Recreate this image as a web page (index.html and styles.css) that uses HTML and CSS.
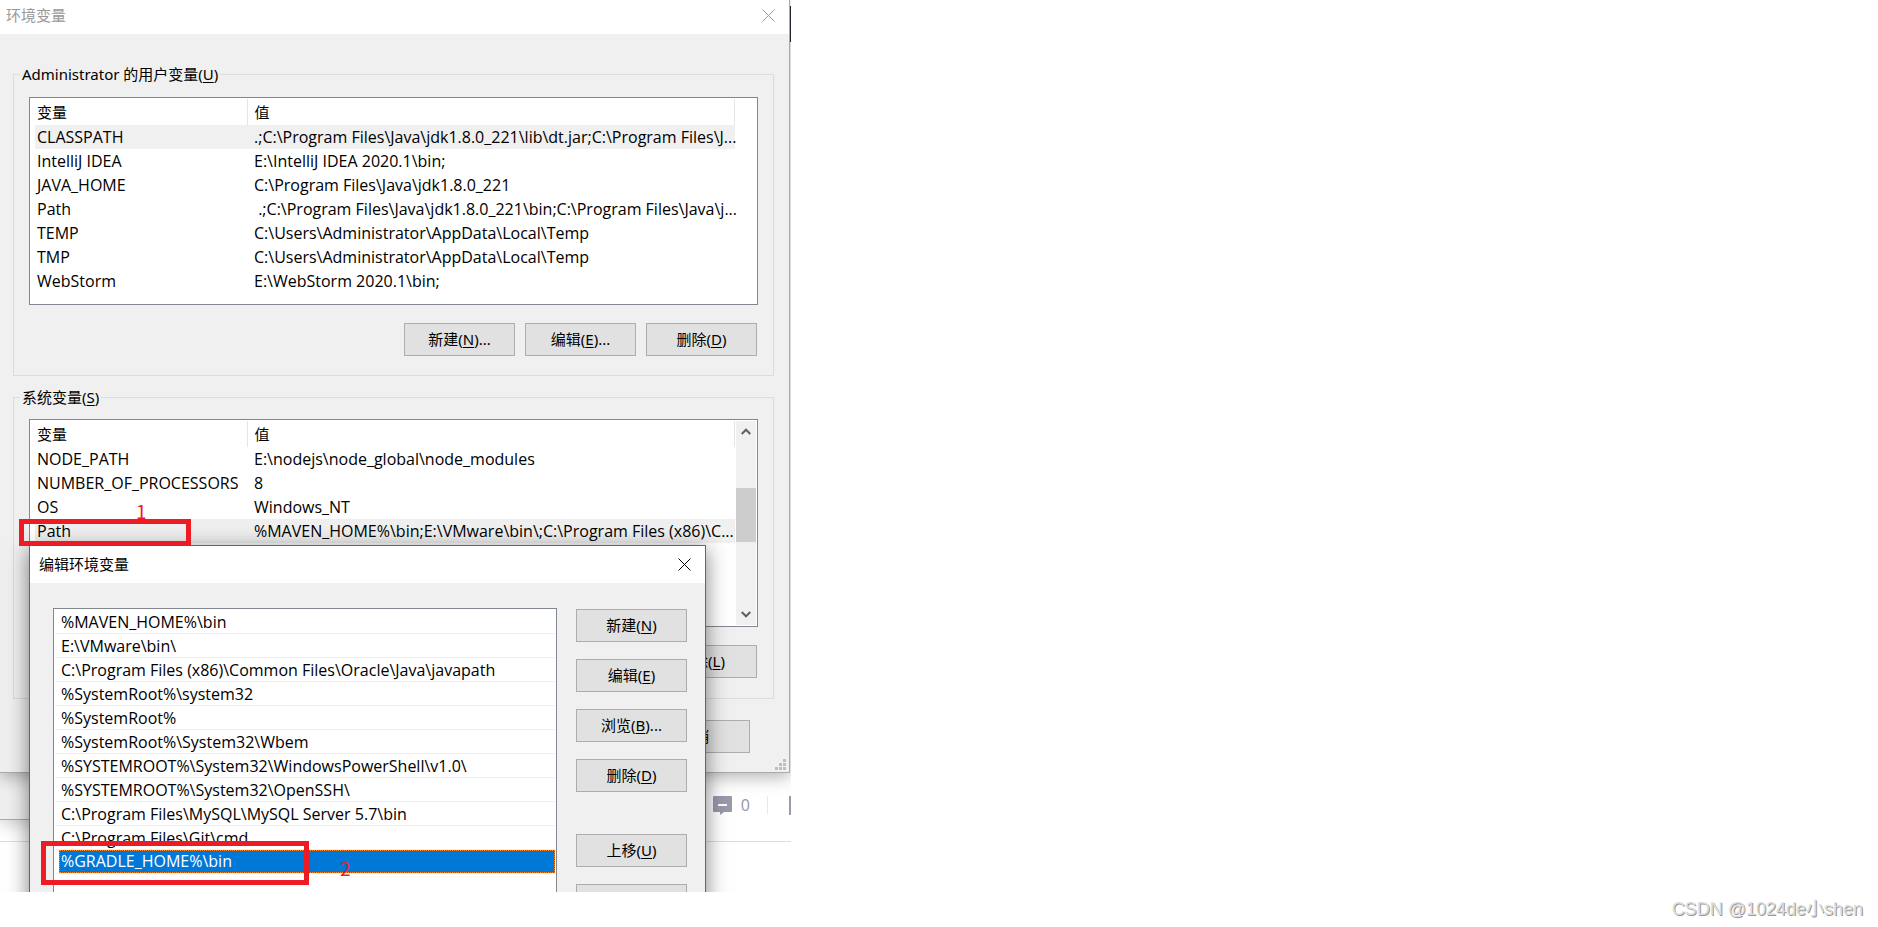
FILE: index.html
```html
<!DOCTYPE html>
<html lang="zh-CN">
<head>
<meta charset="utf-8">
<title>环境变量</title>
<link rel="stylesheet" href="styles.css">
</head>
<body>
<main class="desktop">
  <div class="page-behind">
    <div class="avatar-edge"></div>
    <div class="comment-bar">
      <svg class="comment-icon" width="19" height="19" viewBox="0 0 19 19" aria-hidden="true"><path d="M1 0H18Q19 0 19 1V15Q19 16 18 16H11L7 19V16H1Q0 16 0 15V1Q0 0 1 0Z" fill="#999aaa"/><path d="M5 9H14" stroke="#fff" stroke-width="2"/></svg>
      <span class="comment-count">0</span>
      <span class="comment-split"></span>
      <span class="comment-next"></span>
    </div>
  </div>
  <div class="window-behind"></div>

  <section class="window variables" aria-label="环境变量">
    <header class="titlebar inactive">
      <h1 class="title">环境变量</h1>
      <button class="close" aria-label="关闭"><svg width="13" height="13" viewBox="0 0 13 13"><path d="M.5 .5L12.5 12.5M12.5 .5L.5 12.5" stroke="currentColor" fill="none"/></svg></button>
    </header>
    <div class="window-body">
      <fieldset class="group">
        <legend>Administrator 的用户变量(<u>U</u>)</legend>
        <div class="listbox">
          <table class="list">
            <thead><tr><th>变量</th><th>值</th></tr></thead>
            <tbody>
              <tr class="current"><td>CLASSPATH</td><td>.;C:\Program Files\Java\jdk1.8.0_221\lib\dt.jar;C:\Program Files\J...</td></tr>
              <tr><td>IntelliJ IDEA</td><td>E:\IntelliJ IDEA 2020.1\bin;</td></tr>
              <tr><td>JAVA_HOME</td><td>C:\Program Files\Java\jdk1.8.0_221</td></tr>
              <tr><td>Path</td><td>&nbsp;.;C:\Program Files\Java\jdk1.8.0_221\bin;C:\Program Files\Java\j...</td></tr>
              <tr><td>TEMP</td><td>C:\Users\Administrator\AppData\Local\Temp</td></tr>
              <tr><td>TMP</td><td>C:\Users\Administrator\AppData\Local\Temp</td></tr>
              <tr><td>WebStorm</td><td>E:\WebStorm 2020.1\bin;</td></tr>
            </tbody>
          </table>
        </div>
        <div class="actions">
          <button class="btn">新建(<u>N</u>)...</button>
          <button class="btn">编辑(<u>E</u>)...</button>
          <button class="btn">删除(<u>D</u>)</button>
        </div>
      </fieldset>
      <fieldset class="group">
        <legend>系统变量(<u>S</u>)</legend>
        <div class="listbox">
          <table class="list">
            <thead><tr><th>变量</th><th>值</th></tr></thead>
            <tbody>
              <tr><td>NODE_PATH</td><td>E:\nodejs\node_global\node_modules</td></tr>
              <tr><td>NUMBER_OF_PROCESSORS</td><td>8</td></tr>
              <tr><td>OS</td><td>Windows_NT</td></tr>
              <tr class="current"><td>Path</td><td>%MAVEN_HOME%\bin;E:\VMware\bin\;C:\Program Files (x86)\C...</td></tr>
            </tbody>
          </table>
          <div class="scrollbar" aria-hidden="true">
            <svg width="10" height="7" viewBox="0 0 10 7"><path d="M.7 6L5 1.7L9.3 6" fill="none" stroke="#606060" stroke-width="2"/></svg>
            <div class="thumb"></div>
            <svg width="10" height="7" viewBox="0 0 10 7"><path d="M.7 1L5 5.3L9.3 1" fill="none" stroke="#606060" stroke-width="2"/></svg>
          </div>
        </div>
        <div class="actions">
          <button class="btn">删除(<u>L</u>)</button>
        </div>
      </fieldset>
      <div class="confirm"><button class="btn">取消</button></div>
    </div>
    <svg class="grip" width="11" height="11" viewBox="0 0 11 11" aria-hidden="true"><path d="M8 0h3v3h-3zM4 4h3v3h-3zM8 4h3v3h-3zM0 8h3v3h-3zM4 8h3v3h-3zM8 8h3v3h-3z" fill="#bfbfbf"/></svg>
  </section>

  <section class="window editor" aria-label="编辑环境变量">
    <header class="titlebar">
      <h2 class="title">编辑环境变量</h2>
      <button class="close" aria-label="关闭"><svg width="13" height="13" viewBox="0 0 13 13"><path d="M.5 .5L12.5 12.5M12.5 .5L.5 12.5" stroke="currentColor" fill="none"/></svg></button>
    </header>
    <div class="editor-body">
      <ul class="paths">
        <li>%MAVEN_HOME%\bin</li>
        <li>E:\VMware\bin\</li>
        <li>C:\Program Files (x86)\Common Files\Oracle\Java\javapath</li>
        <li>%SystemRoot%\system32</li>
        <li>%SystemRoot%</li>
        <li>%SystemRoot%\System32\Wbem</li>
        <li>%SYSTEMROOT%\System32\WindowsPowerShell\v1.0\</li>
        <li>%SYSTEMROOT%\System32\OpenSSH\</li>
        <li>C:\Program Files\MySQL\MySQL Server 5.7\bin</li>
        <li>C:\Program Files\Git\cmd</li>
        <li class="selected"><span>%GRADLE_HOME%\bin</span></li>
      </ul>
      <div class="side">
        <button class="btn">新建(<u>N</u>)</button>
        <button class="btn">编辑(<u>E</u>)</button>
        <button class="btn">浏览(<u>B</u>)...</button>
        <button class="btn">删除(<u>D</u>)</button>
        <button class="btn apart">上移(<u>U</u>)</button>
        <button class="btn" aria-label="下移"></button>
      </div>
    </div>
  </section>

  <div class="mark mark-one"></div>
  <span class="step step-one">1</span>
  <div class="mark mark-two"></div>
  <span class="step step-two">2</span>
</main>
<footer class="watermark">CSDN @1024de小shen</footer>
</body>
</html>
```
FILE: styles.css
```css
* { box-sizing: border-box; }

body {
  margin: 0;
  background: #fff;
  color: #000;
  font: 15px/20px "Noto Sans", "Noto Sans CJK SC", sans-serif;
}

/* Canvas that holds the overlapping windows */
.desktop {
  position: relative;
  width: 791px;
  height: 892px;
  overflow: hidden;
}

.window { position: absolute; background: #f0f0f0; }

.variables {
  left: 0;
  top: 0;
  width: 790px;
  border: solid #aaa;
  border-width: 0 1px 1px 0;
  box-shadow: 0 4px 16px rgba(0, 0, 0, .3);
}

.editor {
  left: 29px;
  top: 545px;
  width: 677px;
  border: 1px solid #666;
  box-shadow: 0 4px 20px rgba(0, 0, 0, .5);
}

.titlebar {
  display: flex;
  align-items: center;
  justify-content: space-between;
  height: 37px;
  padding: 0 14px 1px 9px;
  background: #fff;
}

.titlebar.inactive {
  height: 34px;
  padding: 0 14px 4px 6px;
  color: #999;
}

.title { margin: 0; font-size: 15px; font-weight: 400; }

.close {
  display: flex;
  padding: 0;
  border: 0;
  background: none;
  color: inherit;
}

.window-body { padding: 30px 15px 19px 13px; }

.group {
  height: 312px;
  margin: 0 0 11px;
  padding: 13px 15px 0;
  border: 1px solid #dcdcdc;
}

.group + .group { padding-top: 12px; }

legend {
  margin-left: -9px;
  padding: 0 2px;
  line-height: 20px;
}

.listbox {
  display: flex;
  height: 208px;
  padding: 1px 1px 1px 5px;
  border: 1px solid #828790;
  background: #fff;
}

.list {
  flex: none;
  align-self: flex-start;
  width: 700px;
  border-collapse: collapse;
  table-layout: fixed;
  white-space: nowrap;
}

.list th, .list td {
  height: 24px;
  padding: 0 0 0 2px;
  text-align: left;
  font-weight: 400;
}

.list td, .paths {
  font-family: "Open Sans", "Noto Sans CJK SC", sans-serif;
  font-size: 16px;
}

.list th { height: 26px; border-right: 1px solid #e5e5e5; }
.list th:first-child { width: 212px; }
.list td + td, .list th + th { padding-left: 7px; }
.current { background: #f0f0f0; }

.scrollbar {
  display: flex;
  flex-direction: column;
  align-items: center;
  justify-content: space-between;
  width: 20px;
  margin-left: 1px;
  padding: 7px 0;
  background: #f0f0f0;
}

.thumb {
  width: 20px;
  height: 54px;
  margin-bottom: 16px;
  background: #cdcdcd;
}

.actions {
  display: flex;
  justify-content: flex-end;
  gap: 10px;
  padding: 18px 1px 0 0;
}

.btn {
  width: 111px;
  height: 33px;
  padding: 0 0 2px;
  border: 1px solid #adadad;
  background: #e1e1e1;
  color: #000;
  font: inherit;
}

u { text-underline-offset: 2px; }

.confirm {
  display: flex;
  justify-content: flex-end;
  padding: 10px 24px 0 0;
}

.grip { position: absolute; right: 3px; bottom: 2px; }

.editor-body {
  display: flex;
  align-items: flex-start;
  gap: 19px;
  padding: 25px 18px 0 23px;
}

.paths {
  flex: 1;
  height: 320px;
  margin: 0;
  padding: 1px 1px 0;
  border: 1px solid #828790;
  background: #fff;
  list-style: none;
}

.paths li {
  height: 24px;
  padding-left: 6px;
  border-bottom: 1px solid #f0f0f0;
  line-height: 24px;
}

.paths .selected { padding-left: 4px; }

.selected span {
  display: block;
  padding-left: 1px;
  border: 1px dotted #ff8728;
  background: #0078d7;
  color: #fff;
  line-height: 21px;
}

.side {
  display: flex;
  flex-direction: column;
  gap: 17px;
  padding-top: 1px;
}

.apart { margin-top: 25px; }

/* Page content showing behind the windows */
.page-behind {
  position: absolute;
  inset: 0;
  display: flex;
  flex-direction: column;
  justify-content: space-between;
  align-items: flex-end;
  padding: 6px 0 50px;
}

.avatar-edge { width: 2px; height: 36px; background: #2b2838; }

.comment-bar {
  display: flex;
  align-items: center;
  align-self: stretch;
  justify-content: flex-end;
  height: 73px;
  border-bottom: 1px solid #ddd;
}

.comment-count { margin-left: 9px; color: #999aaa; font-size: 16px; }
.comment-split { width: 1px; height: 18px; margin-left: 17px; background: #e8e8ed; }
.comment-next { width: 2px; height: 19px; margin-left: 21px; background: #999aaa; }

.window-behind {
  position: absolute;
  left: 0;
  top: 600px;
  width: 200px;
  height: 220px;
  border-bottom: 1px solid #aaa;
  background: #f0f0f0;
  box-shadow: 0 4px 16px rgba(0, 0, 0, .2);
}

/* Red annotations */
.mark { position: absolute; border: 5px solid #ed1c24; }
.mark-one { left: 19px; top: 519px; width: 172px; height: 27px; z-index: 1; }
.mark-two { left: 41px; top: 841px; width: 268px; height: 44px; }

.step {
  position: absolute;
  color: #ed1c24;
  font: 400 19px/20px "Noto Sans CJK SC", sans-serif;
}

.step-one { left: 136px; top: 501px; }
.step-two { left: 340px; top: 858px; }

.watermark {
  position: absolute;
  right: 15px;
  bottom: 7px;
  color: #ddd;
  font: 18px/22px "Liberation Sans", "Noto Sans CJK SC", sans-serif;
  text-shadow: 1px 1px 0 #999;
}
```
